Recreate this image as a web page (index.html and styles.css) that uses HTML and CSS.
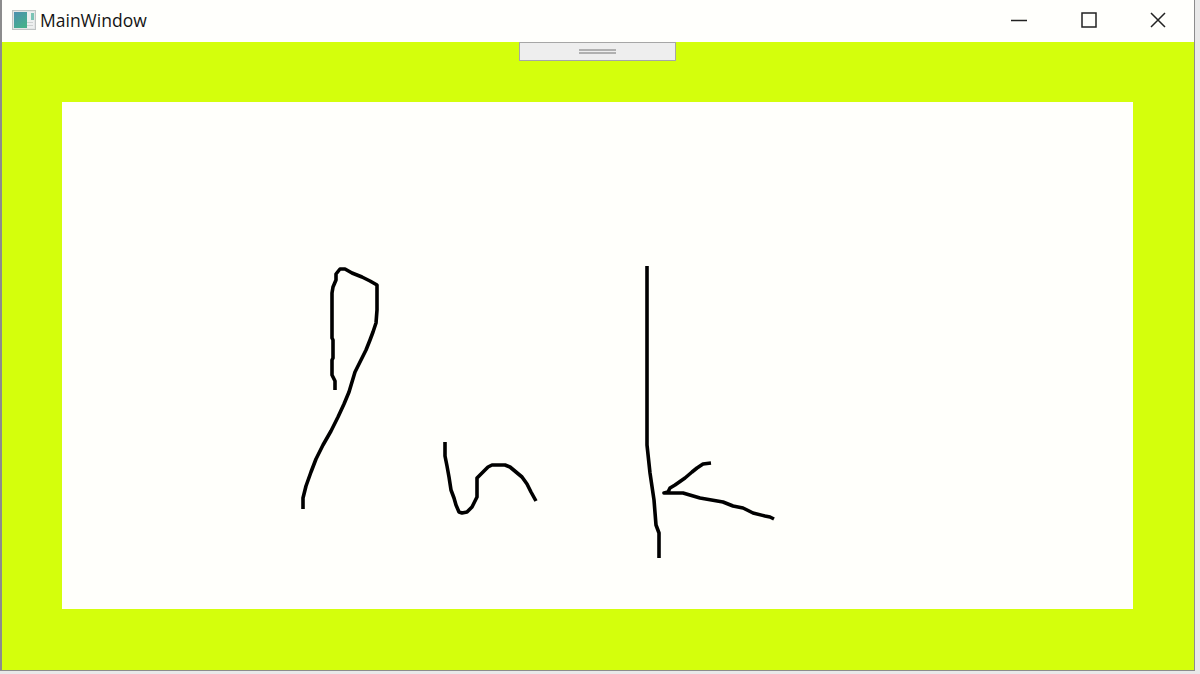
FILE: index.html
```html
<!DOCTYPE html>
<html lang="en">
<head>
    <meta charset="UTF-8">
    <title>MainWindow</title>
    <link rel="stylesheet" href="styles.css">
</head>
<body>
    <div class="window">
        <div class="titlebar">
            <div class="title">
                <svg class="app-icon" width="24" height="20" viewBox="0 0 24 20">
                    <defs>
                        <linearGradient id="pane" x1="0" y1="0" x2="0.6" y2="1">
                            <stop offset="0" stop-color="#4d8fb0"/>
                            <stop offset="1" stop-color="#45b08c"/>
                        </linearGradient>
                    </defs>
                    <rect x="0.5" y="0.5" width="23" height="19" fill="#e4e6e6" stroke="#c0c4c4"/>
                    <rect x="2" y="2" width="13" height="16" fill="url(#pane)"/>
                    <rect x="15" y="2" width="7" height="16" fill="#eef0f0"/>
                    <rect x="19" y="3" width="3" height="7" fill="#7cc4b6"/>
                    <rect x="15" y="12" width="6" height="1" fill="#cfd2d2"/>
                    <rect x="15" y="15" width="6" height="1" fill="#cfd2d2"/>
                </svg>
                <span class="title-text">MainWindow</span>
            </div>
            <div class="controls">
                <div class="control">
                    <svg width="16" height="16" viewBox="0 0 16 16"><path d="M0 8.5H16" class="glyph"/></svg>
                </div>
                <div class="control">
                    <svg width="16" height="16" viewBox="0 0 16 16"><rect x="1" y="1" width="14" height="14" class="glyph"/></svg>
                </div>
                <div class="control">
                    <svg width="16" height="16" viewBox="0 0 16 16"><path d="M1 1L15 15M15 1L1 15" class="glyph"/></svg>
                </div>
            </div>
        </div>
        <div class="client">
            <div class="thumb"><div class="grip"></div></div>
            <div class="canvas">
                <svg class="ink" viewBox="62 102 1071 507">
                    <!-- P -->
                    <polyline points="335,390 335,381 332,375 332,360 333,358 333,340 332,338 332,293 333,287 336,280 336,274 340,269 345,269 352,273 362,277 370,281 377,285 377,310 376,323 373,332 370,340 366,350 362,358 358,366 355,372 352,382 349,392 344,404 338,417 331,431 323,445 316,459 311,472 306,486 303,498 303,509"/>
                    <!-- n -->
                    <polyline points="445,442 445,456 447,466 449,477 451,490 454,498 456,505 459,512 462,513 467,512 472,507 477,497 477,478 483,472 488,467 492,465 505,465 510,467 516,472 522,477 527,484 531,492 536,501"/>
                    <!-- k -->
                    <polyline points="647,266 647,445 650,473 654,500 656,525 659,533 659,558"/>
                    <polyline points="711,463 703,464 697,468 692,472 685,478 675,485 670,488 668,492 664,493 683,493 700,498 723,502 733,506 743,508 753,513 765,516 770,517 774,519"/>
                </svg>
            </div>
        </div>
    </div>
</body>
</html>
```

FILE: styles.css
```css
body {
    margin: 0;
    height: 674px;
    overflow: hidden;
    background-color: #e9e9e9;
    font-family: "Open Sans", "Noto Sans", sans-serif;
}

.window {
    box-sizing: border-box;
    width: 1195px;
    height: 671px;
    display: flex;
    flex-direction: column;
    border-left: 2px solid #8c8c8c;
    border-right: 1px solid #8c8c8c;
    border-bottom: 1px solid #8c8c8c;
}

.titlebar {
    height: 42px;
    flex-shrink: 0;
    display: flex;
    justify-content: space-between;
    align-items: center;
    background-color: #fffffc;
}

.title {
    display: flex;
    align-items: center;
    gap: 4px;
    padding-left: 10px;
    margin-bottom: 2px;
}

.title-text {
    font-size: 17.5px;
    color: #141414;
}

.controls {
    display: flex;
    padding-right: 1px;
    margin-bottom: 2px;
}

.control {
    width: 69.5px;
    display: flex;
    justify-content: center;
    align-items: center;
}

.glyph {
    fill: none;
    stroke: #222;
    stroke-width: 1.5;
}

.client {
    position: relative;
    flex: 1;
    padding: 60px 61px 60px 60px;
    background-color: #d4ff0c;
}

.thumb {
    position: absolute;
    top: 0;
    left: 517px;
    box-sizing: border-box;
    width: 157px;
    height: 19px;
    display: flex;
    justify-content: center;
    align-items: center;
    background-color: #eeeeee;
    border: 1px solid #a6a6a6;
}

.grip {
    width: 37px;
    height: 1px;
    border-top: 2px solid #b0b0b0;
    border-bottom: 2px solid #b0b0b0;
}

.canvas {
    height: 507px;
    background-color: #fffffb;
}

.ink {
    display: block;
    width: 100%;
    height: 100%;
}

.ink polyline {
    fill: none;
    stroke: #000;
    stroke-width: 3.6;
    stroke-linejoin: round;
}
```
